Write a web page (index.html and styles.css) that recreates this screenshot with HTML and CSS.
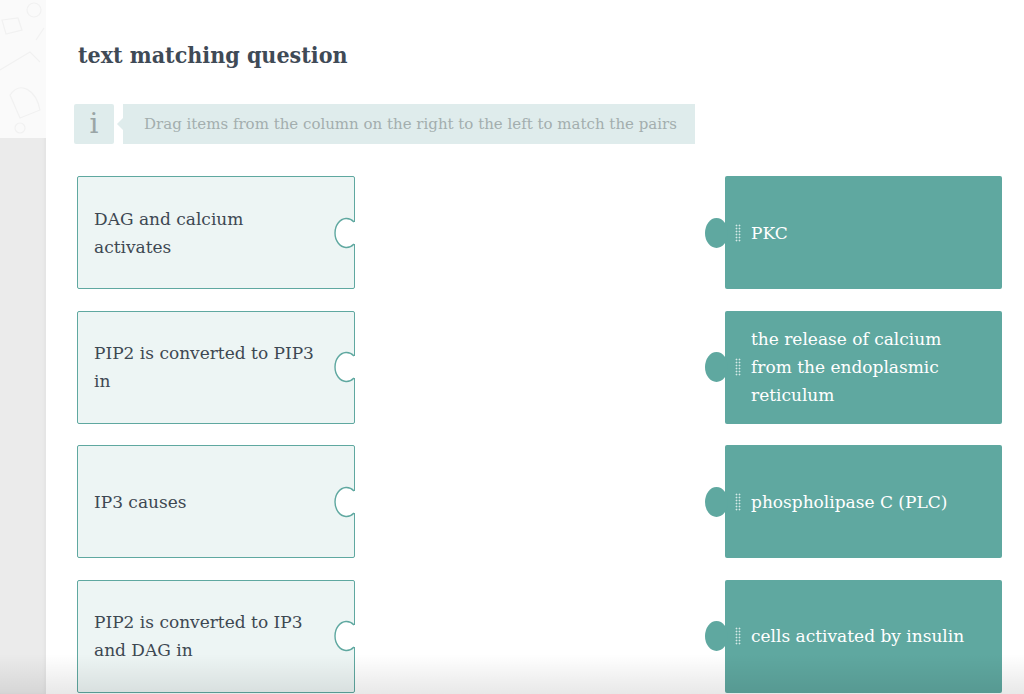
FILE: index.html
```html
<!DOCTYPE html>
<html lang="en">
<head>
<meta charset="utf-8">
<title>text matching question</title>
<link rel="stylesheet" href="styles.css">
</head>
<body>
<div class="sidebar">
  <div class="sidebar-top">
    <svg class="doodle" width="46" height="138" viewBox="0 0 46 138" fill="none" stroke="#f1f1f1" stroke-width="1.2">
      <path d="M2 20 L18 18 L22 30 L6 34 Z"/>
      <circle cx="34" cy="10" r="7"/>
      <path d="M0 70 L30 52 L40 62"/>
      <path d="M10 95 C20 80 36 90 40 110 L20 118 Z"/>
      <circle cx="20" cy="128" r="5"/>
      <path d="M36 40 L44 28"/>
    </svg>
  </div>
</div>
<main class="main">
  <h1 class="title">text matching question</h1>
  <div class="info">
    <div class="info-icon">i</div>
    <div class="info-text">Drag items from the column on the right to the left to match the pairs</div>
  </div>
  <div class="pairs">
    <div class="card target"><p>DAG and calcium<br>activates</p><svg class="socket" width="22" height="32" viewBox="0 0 22 32"><path d="M21 5 A11.5 14.5 0 1 0 21 27 L22 27 L22 5 Z" fill="#ffffff"/><path d="M21 5 A11.5 14.5 0 1 0 21 27" fill="none" stroke="#5fa8a0" stroke-width="1.4"/></svg></div>
    <div class="card item"><span class="handle"></span><p>PKC</p></div>

    <div class="card target"><p>PIP2 is converted to PIP3<br>in</p><svg class="socket" width="22" height="32" viewBox="0 0 22 32"><path d="M21 5 A11.5 14.5 0 1 0 21 27 L22 27 L22 5 Z" fill="#ffffff"/><path d="M21 5 A11.5 14.5 0 1 0 21 27" fill="none" stroke="#5fa8a0" stroke-width="1.4"/></svg></div>
    <div class="card item"><span class="handle"></span><p>the release of calcium<br>from the endoplasmic<br>reticulum</p></div>

    <div class="card target"><p>IP3 causes</p><svg class="socket" width="22" height="32" viewBox="0 0 22 32"><path d="M21 5 A11.5 14.5 0 1 0 21 27 L22 27 L22 5 Z" fill="#ffffff"/><path d="M21 5 A11.5 14.5 0 1 0 21 27" fill="none" stroke="#5fa8a0" stroke-width="1.4"/></svg></div>
    <div class="card item"><span class="handle"></span><p>phospholipase C (PLC)</p></div>

    <div class="card target"><p>PIP2 is converted to IP3<br>and DAG in</p><svg class="socket" width="22" height="32" viewBox="0 0 22 32"><path d="M21 5 A11.5 14.5 0 1 0 21 27 L22 27 L22 5 Z" fill="#ffffff"/><path d="M21 5 A11.5 14.5 0 1 0 21 27" fill="none" stroke="#5fa8a0" stroke-width="1.4"/></svg></div>
    <div class="card item"><span class="handle"></span><p>cells activated by insulin</p></div>
  </div>
</main>
<div class="fade"></div>
</body>
</html>
```

FILE: styles.css
```css
html, body {
  margin: 0;
  padding: 0;
  height: 100%;
  overflow: hidden;
}
body {
  display: flex;
  background: #ffffff;
  font-family: "DejaVu Serif", "Liberation Serif", serif;
  color: #3d4852;
  position: relative;
}
.sidebar {
  width: 46px;
  flex: none;
  background: #ebebeb;
  box-shadow: inset -2px 0 3px rgba(0,0,0,0.03);
}
.sidebar-top {
  height: 138px;
  background: #fafafa;
}
.doodle { display: block; }
.main {
  flex: 1;
  padding: 0 0 0 31px;
}
.title {
  margin: 41px 0 0 1px;
  font-size: 23px;
  font-stretch: condensed;
  line-height: 28px;
  font-weight: bold;
  color: #3f4a56;
}
.info {
  display: flex;
  margin: 35px 0 0 -3px;
  height: 40px;
}
.info-icon {
  width: 40px;
  height: 40px;
  background: #dfecec;
  border-radius: 2px;
  color: #9aa5a6;
  font-size: 28px;
  line-height: 40px;
  text-align: center;
}
.info-text {
  position: relative;
  margin-left: 9px;
  width: 551px;
  padding-left: 21px;
  background: #dfecec;
  color: #a3aeae;
  font-size: 15px;
  line-height: 40px;
}
.info-text::before {
  content: "";
  position: absolute;
  left: -6px;
  top: 14px;
  border-style: solid;
  border-width: 6px 6px 6px 0;
  border-color: transparent #dfecec transparent transparent;
}
.pairs {
  margin-top: 32px;
  display: grid;
  grid-template-columns: 278px 277px;
  column-gap: 370px;
  grid-auto-rows: 113px;
  row-gap: 21.5px;
}
.card {
  position: relative;
  display: flex;
  align-items: center;
  box-sizing: border-box;
  border-radius: 2px;
}
.card p {
  margin: 0;
  font-size: 17px;
  line-height: 28px;
}
.target {
  background: #edf5f4;
  border: 1px solid #5fa8a0;
  padding: 0 24px 0 16px;
}
.socket {
  position: absolute;
  right: -1px;
  top: 50%;
  margin-top: -16px;
}
.item {
  background: #5fa8a0;
  color: #ffffff;
  padding: 0 16px 0 10px;
}
.item::before {
  content: "";
  position: absolute;
  left: -20px;
  top: 50%;
  margin-top: -15px;
  width: 23px;
  height: 30px;
  border-radius: 50%;
  background: #5fa8a0;
}
.handle {
  flex: none;
  width: 6px;
  height: 18px;
  margin-right: 10px;
  background-image: radial-gradient(circle, rgba(255,255,255,0.75) 0.8px, transparent 1.1px);
  background-size: 3px 3px;
}
.item p { color: #ffffff; }
.fade {
  position: absolute;
  left: 0;
  right: 0;
  bottom: 0;
  height: 40px;
  background: linear-gradient(to bottom, rgba(0,0,0,0), rgba(0,0,0,0.09));
  pointer-events: none;
}
```
